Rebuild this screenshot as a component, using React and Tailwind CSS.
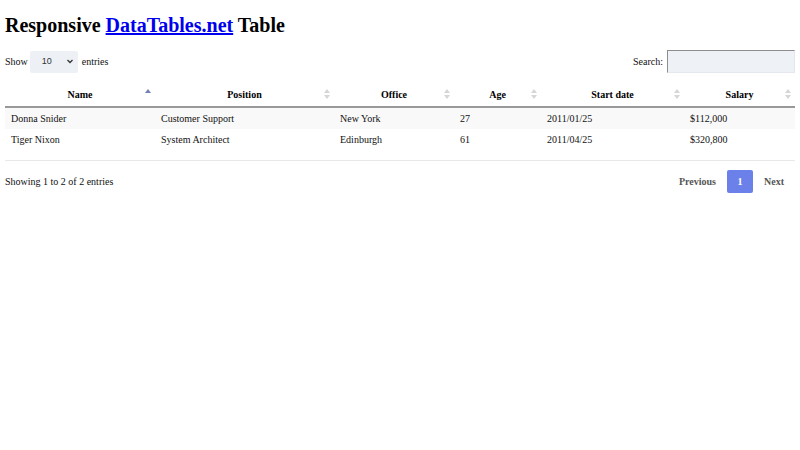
import React from "react";

function SortIcon({ active }) {
  return (
    <svg
      className="absolute right-[4px] top-[5px]"
      width="6"
      height="10"
      viewBox="0 0 6 10"
    >
      <path d="M3 0 L6 4 L0 4 Z" fill={active ? "#7280b8" : "#d6d6d6"} />
      <path d="M0 6 L6 6 L3 10 Z" fill={active ? "#ffffff" : "#d6d6d6"} />
    </svg>
  );
}

const cols = [
  { label: "Name", w: 150, active: true },
  { label: "Position", w: 179 },
  { label: "Office", w: 120 },
  { label: "Age", w: 87 },
  { label: "Start date", w: 143 },
  { label: "Salary", w: 111 },
];

const rows = [
  ["Donna Snider", "Customer Support", "New York", "27", "2011/01/25", "$112,000"],
  ["Tiger Nixon", "System Architect", "Edinburgh", "61", "2011/04/25", "$320,800"],
];

export default function App() {
  return (
    <div className="min-h-[450px] bg-white px-[5px] font-['Liberation_Serif',serif] text-[10px] text-[#111]">
      <h1 className="pt-[14px] text-[20px] font-bold leading-[23px] text-black">
        Responsive{" "}
        <a href="#" className="text-[#0000ee] underline">
          DataTables.net
        </a>{" "}
        Table
      </h1>

      <div className="mt-[13px] flex h-[23px] items-center justify-between">
        <label className="flex items-center">
          <span>Show</span>
          <span className="relative mx-[2px] flex">
            <select className="h-[22px] w-[48px] appearance-none rounded-[2px] bg-[#edf1f6] pl-[12px] font-['Liberation_Sans',sans-serif] text-[9px] text-[#333] outline-none">
              <option>10</option>
              <option>25</option>
              <option>50</option>
              <option>100</option>
            </select>
            <svg
              className="pointer-events-none absolute right-[5px] top-[8px]"
              width="6"
              height="5"
              viewBox="0 0 6 5"
            >
              <path d="M0.5 1 L3 3.5 L5.5 1" fill="none" stroke="#333" strokeWidth="1.3" />
            </svg>
          </span>
          <span className="ml-[2px]">entries</span>
        </label>
        <label className="flex items-center">
          <span>Search:</span>
          <input
            type="search"
            className="ml-[4px] h-[23px] w-[128px] border border-b-[#e4e8ee] border-l-[#8d8d8d] border-r-[#e4e8ee] border-t-[#8d8d8d] bg-[#eef2f6] outline-none"
          />
        </label>
      </div>

      <table className="mt-[11px] w-[790px] table-fixed border-collapse">
        <colgroup>
          {cols.map((c) => (
            <col key={c.label} style={{ width: c.w }} />
          ))}
        </colgroup>
        <thead>
          <tr>
            {cols.map((c) => (
              <th
                key={c.label}
                className="relative h-[22px] border-b-2 border-[#999] p-0 text-center font-bold leading-[22px] text-black"
              >
                {c.label}
                <SortIcon active={c.active} />
              </th>
            ))}
          </tr>
        </thead>
        <tbody>
          {rows.map((r, i) => (
            <tr key={i} className={i === 0 ? "bg-[#f9f9f9]" : "bg-white"}>
              {r.map((v, j) => (
                <td key={j} className="px-[6px] py-0 text-left leading-[21px]">
                  {v}
                </td>
              ))}
            </tr>
          ))}
        </tbody>
      </table>
      <div className="mt-[10px] border-b border-[#e8e8e8]"></div>

      <div className="mt-[9px] flex h-[23px] items-center justify-between">
        <div>Showing 1 to 2 of 2 entries</div>
        <div className="flex h-[23px] items-center">
          <button className="h-[23px] px-[11px] font-bold text-[#555]">Previous</button>
          <button className="h-[23px] w-[26px] rounded-[2px] bg-[#6b80e8] font-bold text-white">
            1
          </button>
          <button className="h-[23px] px-[11px] font-bold text-[#555]">Next</button>
        </div>
      </div>
    </div>
  );
}
